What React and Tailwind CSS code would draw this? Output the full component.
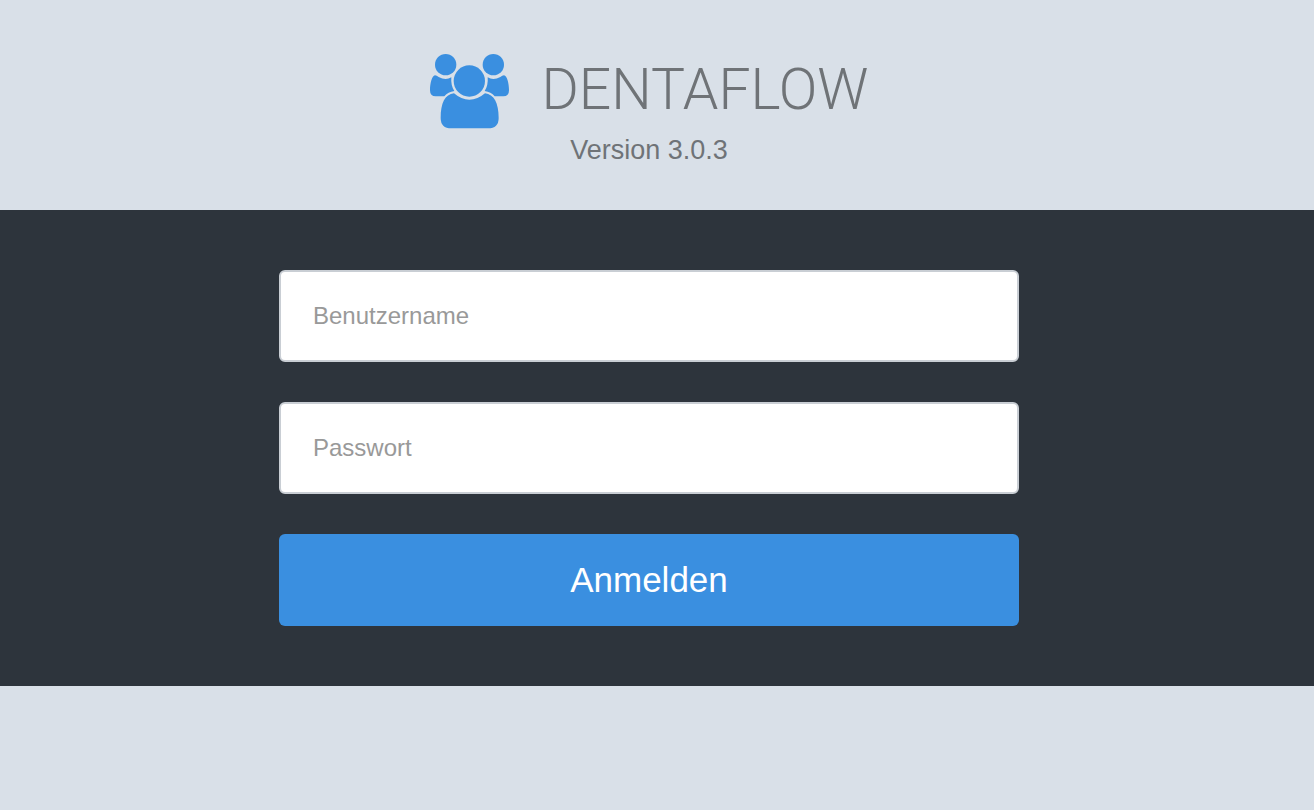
const field =
  "block h-[92px] w-full rounded-md border-2 border-[#c9ced4] bg-white px-8 text-2xl text-[#555] placeholder:text-[#999] outline-none focus:border-[#3a8fe0]";

function TeamIcon() {
  return (
    <svg viewBox="30 34 240 234" className="h-[78px] w-20 shrink-0 fill-[#3a8fe0]" aria-hidden="true">
      <circle cx="77" cy="75" r="32" />
      <circle cx="220" cy="75" r="32" />
      <circle cx="148" cy="124" r="47" />
      <path d="M45 107C36 109 30 130 30 152Q30 170 47 170H73Q84 157 103 154Q92 138 94 113Q77 123 56 112Q50 107 45 107Z" />
      <path d="M252 107C261 109 267 130 267 152Q267 170 250 170H224Q213 157 194 154Q205 138 203 113Q220 123 241 112Q247 107 252 107Z" />
      <path d="M102 161C75 164 62 190 62 235Q62 266 94 266H204Q236 266 236 235C236 190 222 164 195 161Q173 180 148 180Q124 180 102 161Z" />
    </svg>
  );
}

export default function App() {
  return (
    <div className="flex min-h-screen flex-col bg-[#d9e0e8] font-['Liberation_Sans',Arial,sans-serif]">
      <header className="flex flex-col items-center pt-12 pr-4 pb-[42px] text-[#6f7377]">
        <div className="flex items-center gap-8">
          <TeamIcon />
          <h1 className="font-['Roboto',sans-serif] text-[57px] leading-[84px] font-light">DENTAFLOW</h1>
        </div>
        <p className="text-[27px] leading-9">Version 3.0.3</p>
      </header>
      <main className="bg-[#2d343c] py-15 pr-4">
        <form className="mx-auto flex w-full max-w-[740px] flex-col gap-10" onSubmit={(e) => e.preventDefault()}>
          <input className={field} type="text" placeholder="Benutzername" aria-label="Benutzername" />
          <input className={field} type="password" placeholder="Passwort" aria-label="Passwort" />
          <button className="h-[92px] rounded-md bg-[#3a8fe0] text-[35px] text-white" type="submit">
            Anmelden
          </button>
        </form>
      </main>
    </div>
  );
}
